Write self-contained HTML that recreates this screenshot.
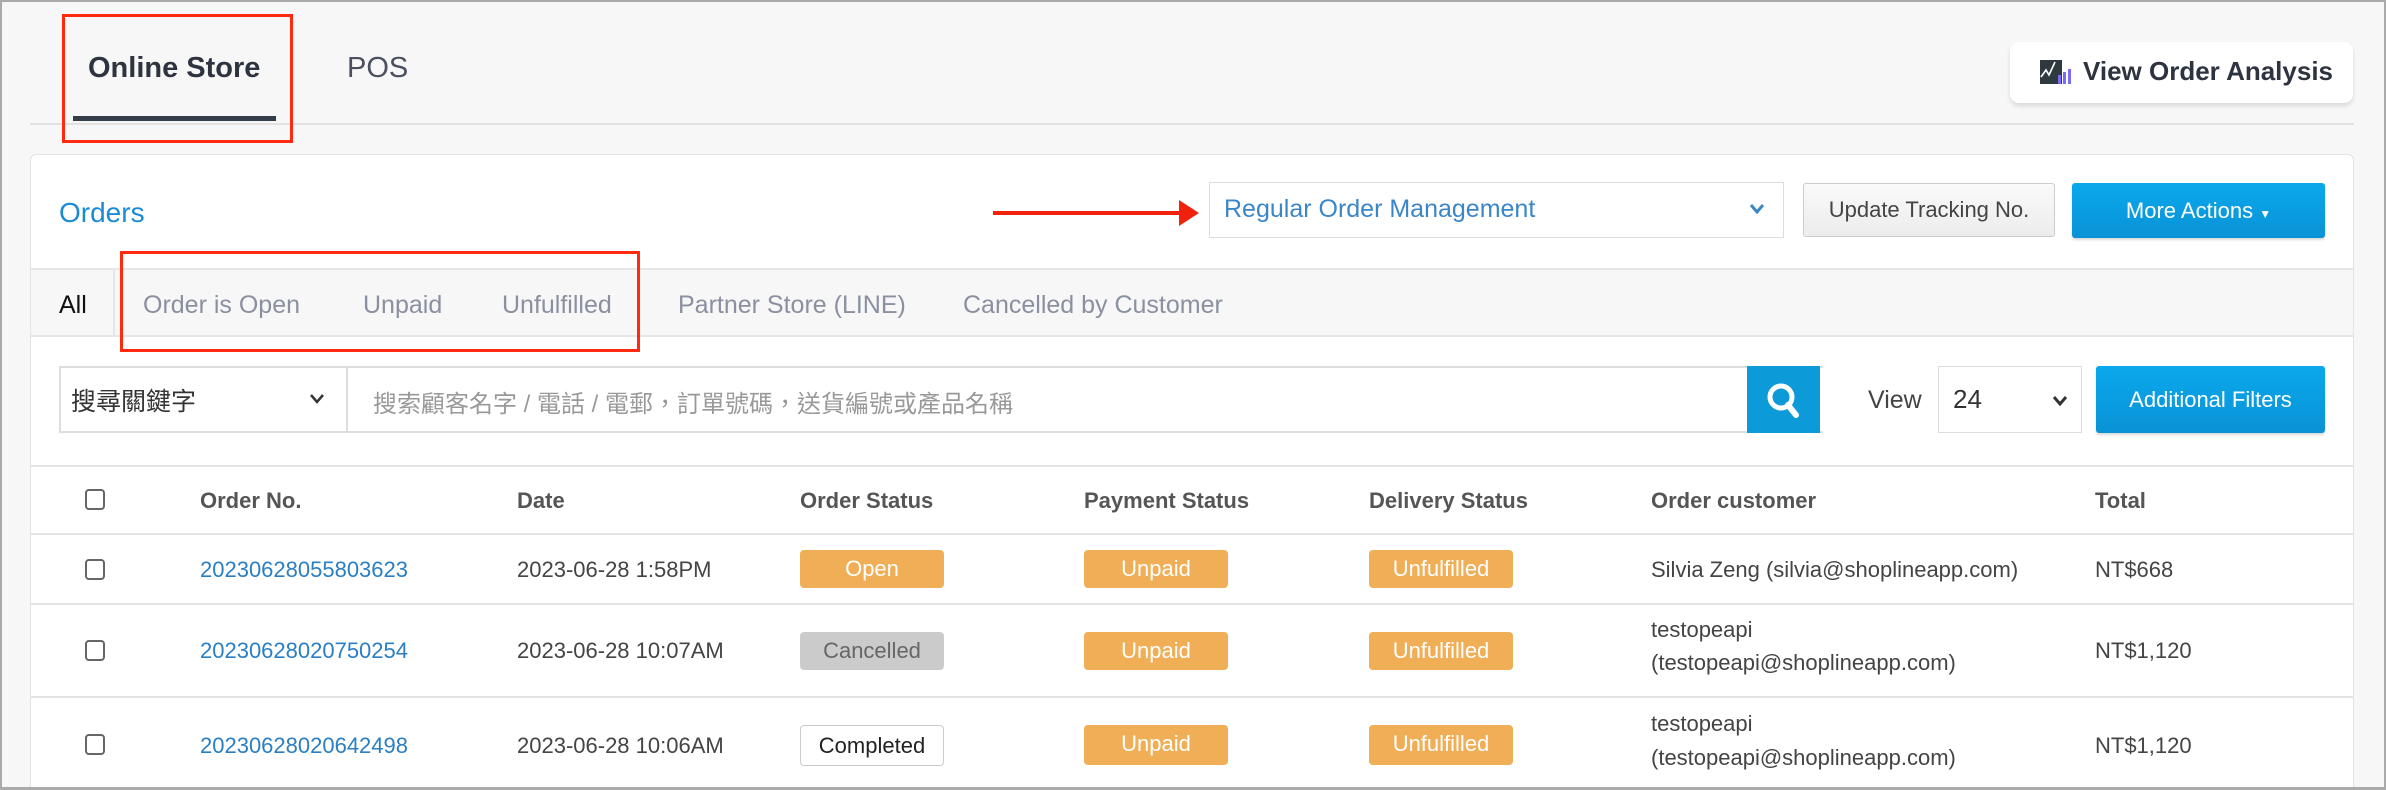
<!DOCTYPE html>
<html style="width:2386px;height:790px;overflow:hidden"><head><meta charset="utf-8"><style>
*{box-sizing:border-box;margin:0;padding:0}
body{width:2386px;height:790px;overflow:hidden;background:#f7f7f7;font-family:"Liberation Sans","Noto Sans CJK TC",sans-serif;position:relative}
.frame{position:absolute;left:0;top:0;width:2386px;height:790px;border:2px solid #aaa;border-bottom-width:3px;pointer-events:none;z-index:10}
.a{position:absolute;white-space:nowrap}
.red{position:absolute;border:3px solid #ff2a10;z-index:5}
.card{position:absolute;left:30px;top:154px;width:2324px;height:636px;background:#fff;border:1px solid #e3e3e3;border-bottom:none;border-radius:6px 6px 0 0;overflow:hidden}
.badge{position:absolute;width:144px;height:38px;border-radius:4px;background:#f0ae56;color:#fff;font-size:22px;text-align:center;line-height:38px}
.cb{position:absolute;width:20px;height:21px;border:2px solid #666;border-radius:4px;background:#fff}
.td{position:absolute;font-size:22px;color:#444;white-space:nowrap}
.th{position:absolute;font-size:22px;color:#555;font-weight:bold;white-space:nowrap}
.ln{position:absolute;left:0;width:100%;height:2px;background:#e4e4e4}
</style></head><body>
<div class="frame"></div>
<div class="a" style="left:88px;top:52px;font-size:29px;font-weight:bold;color:#2d3440">Online Store</div>
<div class="a" style="left:347px;top:52px;font-size:29px;color:#4a5060">POS</div>
<div class="a" style="left:73px;top:116px;width:203px;height:5px;background:#353c4a"></div>
<div class="a" style="left:30px;top:123px;width:2324px;height:2px;background:#e2e2e2"></div>
<div class="red" style="left:62px;top:14px;width:231px;height:129px"></div>

<div class="a" style="left:2010px;top:42px;width:343px;height:61px;background:#fff;border-radius:9px;box-shadow:0 3px 5px rgba(0,0,0,.12)"></div>
<svg class="a" style="left:2040px;top:60px" width="34" height="25" viewBox="0 0 34 25"><rect x="0" y="0" width="22" height="24" fill="#2f3a40"/><path d="M1 17 L6 10 L9 15 L15 2" stroke="#fff" stroke-width="1.6" fill="none"/><rect x="18" y="15" width="3" height="9" fill="#7a6cf5"/><rect x="23" y="12" width="3" height="12" fill="#7a6cf5"/><rect x="28" y="9" width="3" height="15" fill="#7a6cf5"/></svg>
<div class="a" style="left:2083px;top:56px;font-size:26px;font-weight:bold;color:#2d3440">View Order Analysis</div>

<div class="card">
  <div class="a" style="left:28px;top:42px;font-size:28px;color:#1a8bd4">Orders</div>
  <div class="a" style="left:962px;top:56px;width:190px;height:4px;background:#f0220e"></div>
  <svg class="a" style="left:1148px;top:45px" width="20" height="26"><path d="M0 0 L20 13 L0 26Z" fill="#f0220e"/></svg>
  <div class="a" style="left:1178px;top:27px;width:575px;height:56px;border:1px solid #ddd;background:#fff"></div>
  <div class="a" style="left:1193px;top:40px;font-size:25px;color:#3a86c8">Regular Order Management</div>
  <svg class="a" style="left:1718px;top:48px" width="16" height="12"><path d="M2 2 L8 9 L14 2" stroke="#3a86c8" stroke-width="3" fill="none"/></svg>
  <div class="a" style="left:1772px;top:28px;width:252px;height:54px;border:1px solid #ccc;border-radius:3px;background:linear-gradient(#fafafa,#ececec);font-size:22px;color:#444;text-align:center;line-height:52px">Update Tracking No.</div>
  <div class="a" style="left:2041px;top:28px;width:253px;height:55px;border-radius:3px;background:linear-gradient(#0aa8ec,#0a92d6);font-size:22px;color:#fff;text-align:center;line-height:55px;box-shadow:0 2px 2px rgba(0,0,0,.15)">More Actions <span style="font-size:12px">▼</span></div>

  <div class="a" style="left:0;top:113px;width:100%;height:69px;background:#f7f7f8;border-top:2px solid #e6e6e6;border-bottom:2px solid #e6e6e6"></div>
  <div class="a" style="left:28px;top:136px;font-size:25px;color:#111">All</div>
  <div class="a" style="left:82px;top:114px;width:2px;height:67px;background:#e6e6e6"></div>
  <div class="a" style="left:112px;top:136px;font-size:25px;color:#8a90a0">Order is Open</div>
  <div class="a" style="left:332px;top:136px;font-size:25px;color:#8a90a0">Unpaid</div>
  <div class="a" style="left:471px;top:136px;font-size:25px;color:#8a90a0">Unfulfilled</div>
  <div class="a" style="left:647px;top:136px;font-size:25px;color:#8a90a0">Partner Store (LINE)</div>
  <div class="a" style="left:932px;top:136px;font-size:25px;color:#8a90a0">Cancelled by Customer</div>

  <div class="a" style="left:28px;top:211px;width:1764px;height:67px;border:2px solid #ddd;border-right:none;background:#fff"></div>
  <div class="a" style="left:315px;top:211px;width:2px;height:67px;background:#ddd"></div>
  <div class="a" style="left:40px;top:227px;font-size:25px;color:#333">搜尋關鍵字</div>
  <svg class="a" style="left:278px;top:238px" width="16" height="12"><path d="M2 2 L8 9 L14 2" stroke="#333" stroke-width="2.5" fill="none"/></svg>
  <div class="a" style="left:342px;top:229px;font-size:24px;color:#999">搜索顧客名字 / 電話 / 電郵，訂單號碼，送貨編號或產品名稱</div>
  <div class="a" style="left:1716px;top:211px;width:73px;height:67px;background:#0c9ad9"></div>
  <svg class="a" style="left:1735px;top:227px" width="36" height="38"><circle cx="15" cy="15" r="11" stroke="#fff" stroke-width="5" fill="none"/><path d="M22 23 L30 33" stroke="#fff" stroke-width="6" stroke-linecap="round"/></svg>
  <div class="a" style="left:1837px;top:231px;font-size:25px;color:#444">View</div>
  <div class="a" style="left:1907px;top:211px;width:144px;height:67px;border:1px solid #ddd;background:#fff"></div>
  <div class="a" style="left:1922px;top:229px;font-size:26px;color:#333">24</div>
  <svg class="a" style="left:2021px;top:240px" width="16" height="12"><path d="M2 2 L8 9 L14 2" stroke="#333" stroke-width="3" fill="none"/></svg>
  <div class="a" style="left:2065px;top:211px;width:229px;height:67px;border-radius:3px;background:linear-gradient(#0aa8ec,#0a92d6);font-size:22px;color:#fff;text-align:center;line-height:67px;box-shadow:0 2px 2px rgba(0,0,0,.15)">Additional Filters</div>

  <div class="ln" style="top:310px"></div>
  <div class="cb" style="left:54px;top:334px"></div>
  <div class="th" style="left:169px;top:333px">Order No.</div>
  <div class="th" style="left:486px;top:333px">Date</div>
  <div class="th" style="left:769px;top:333px">Order Status</div>
  <div class="th" style="left:1053px;top:333px">Payment Status</div>
  <div class="th" style="left:1338px;top:333px">Delivery Status</div>
  <div class="th" style="left:1620px;top:333px">Order customer</div>
  <div class="th" style="left:2064px;top:333px">Total</div>
  <div class="ln" style="top:378px"></div>

  <div class="cb" style="left:54px;top:404px"></div>
  <div class="td" style="left:169px;top:402px;color:#2a7fc4">20230628055803623</div>
  <div class="td" style="left:486px;top:402px">2023-06-28 1:58PM</div>
  <div class="badge" style="left:769px;top:395px">Open</div>
  <div class="badge" style="left:1053px;top:395px">Unpaid</div>
  <div class="badge" style="left:1338px;top:395px">Unfulfilled</div>
  <div class="td" style="left:1620px;top:402px">Silvia Zeng (silvia@shoplineapp.com)</div>
  <div class="td" style="left:2064px;top:402px">NT$668</div>
  <div class="ln" style="top:448px"></div>

  <div class="cb" style="left:54px;top:485px"></div>
  <div class="td" style="left:169px;top:483px;color:#2a7fc4">20230628020750254</div>
  <div class="td" style="left:486px;top:483px">2023-06-28 10:07AM</div>
  <div class="badge" style="left:769px;top:477px;background:#cbcbcb;color:#666">Cancelled</div>
  <div class="badge" style="left:1053px;top:477px">Unpaid</div>
  <div class="badge" style="left:1338px;top:477px">Unfulfilled</div>
  <div class="td" style="left:1620px;top:462px">testopeapi</div>
  <div class="td" style="left:1620px;top:495px">(testopeapi@shoplineapp.com)</div>
  <div class="td" style="left:2064px;top:483px">NT$1,120</div>
  <div class="ln" style="top:541px"></div>

  <div class="cb" style="left:54px;top:579px"></div>
  <div class="td" style="left:169px;top:578px;color:#2a7fc4">20230628020642498</div>
  <div class="td" style="left:486px;top:578px">2023-06-28 10:06AM</div>
  <div class="badge" style="left:769px;top:570px;background:#fff;border:1px solid #ccc;color:#222;height:41px;line-height:39px">Completed</div>
  <div class="badge" style="left:1053px;top:570px;height:40px">Unpaid</div>
  <div class="badge" style="left:1338px;top:570px;height:40px">Unfulfilled</div>
  <div class="td" style="left:1620px;top:556px">testopeapi</div>
  <div class="td" style="left:1620px;top:590px">(testopeapi@shoplineapp.com)</div>
  <div class="td" style="left:2064px;top:578px">NT$1,120</div>
</div>
<div class="red" style="left:120px;top:251px;width:520px;height:101px"></div>
</body></html>
